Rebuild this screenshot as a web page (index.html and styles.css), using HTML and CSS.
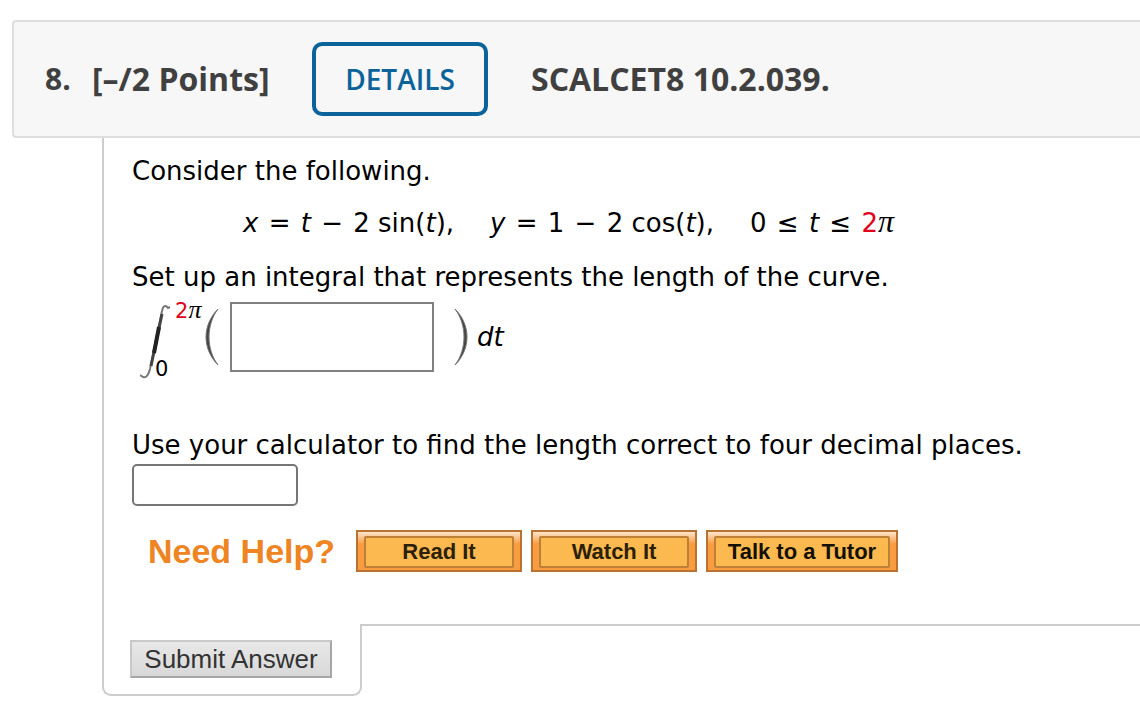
FILE: index.html
```html
<!DOCTYPE html>
<html lang="en">
<head>
<meta charset="utf-8">
<meta name="viewport" content="width=device-width, initial-scale=1">
<title>SCALCET8 10.2.039</title>
<link rel="stylesheet" href="styles.css">
</head>
<body>
<main class="question">
  <header class="question-header">
    <span class="number">8.</span>
    <span class="points">[–/2 Points]</span>
    <button type="button" class="details">DETAILS</button>
    <h1 class="source">SCALCET8 10.2.039.</h1>
  </header>
  <form class="question-body">
    <div class="content">
      <p class="line">Consider the following.</p>
      <p class="line equation">
        <span><i>x</i> <span class="op">=</span> <i>t</i> <span class="op">−</span> 2 sin(<i>t</i>),</span>
        <span><i>y</i> <span class="op">=</span> 1 <span class="op">−</span> 2 cos(<i>t</i>),</span>
        <span>0 <span class="op">≤</span> <i>t</i> <span class="op">≤</span> <span class="value">2</span><i class="pi">π</i></span>
      </p>
      <p class="line">Set up an integral that represents the length of the curve.</p>
      <div class="integral">
        <svg class="sign" width="32" height="78" viewBox="0 0 32 78" aria-hidden="true">
          <path d="M30 5L28 6C26 3 23 3 22 9L10 67C8 75 5 76 3 75L0 73" fill="none" stroke="#777" stroke-width="2"/>
          <path d="M22 12L11 64" fill="none" stroke="#444" stroke-width="3"/>
          <path d="M19 25L14 51" fill="none" stroke="#222" stroke-width="4"/>
        </svg>
        <div class="limits">
          <span class="upper"><span class="value">2</span><i class="pi">π</i></span>
          <span class="lower">0</span>
        </div>
        <svg width="14" height="58" viewBox="0 0 14 58" aria-hidden="true">
          <path d="M13 1C-3 17-3 41 13 57C1 41 1 17 13 1Z" fill="#444" stroke="#777" stroke-width="1"/>
        </svg>
        <input class="integrand" type="text" aria-label="Integrand">
        <svg width="14" height="58" viewBox="0 0 14 58" aria-hidden="true">
          <path d="M1 1C17 17 17 41 1 57C13 41 13 17 1 1Z" fill="#444" stroke="#777" stroke-width="1"/>
        </svg>
        <i class="differential">dt</i>
      </div>
      <label class="line" for="length">Use your calculator to find the length correct to four decimal places.</label>
      <input class="answer" id="length" type="text">
      <div class="help">
        <strong class="help-title">Need Help?</strong>
        <button type="button" class="help-button"><span>Read It</span></button>
        <button type="button" class="help-button"><span>Watch It</span></button>
        <button type="button" class="help-button wide"><span>Talk to a Tutor</span></button>
      </div>
    </div>
    <div class="footer">
      <div class="submit-tab"><button type="submit" class="submit">Submit Answer</button></div>
      <div class="footer-rule"></div>
    </div>
  </form>
</main>
</body>
</html>
```
FILE: styles.css
```css
* { box-sizing: border-box; }

body {
  margin: 0;
  background: #fff;
  color: #000;
  font: 26px/32px Verdana, "DejaVu Sans", sans-serif;
}

p, h1 { margin: 0; }

button, input { margin: 0; }

.question { padding: 20px 0 16px 12px; }

.question-header {
  display: flex;
  align-items: center;
  padding: 20px 0 20px 31px;
  border: 2px solid #dedede;
  border-right: 0;
  border-radius: 4px 0 0 4px;
  background: #f7f7f7;
  color: #404040;
  font: bold 32px/44px "Open Sans", sans-serif;
}

.number { width: 47px; font-size: 30px; }

.points { width: 220px; }

.details {
  width: 176px;
  height: 74px;
  margin-right: 43px;
  padding: 0;
  border: 4px solid #0b6399;
  border-radius: 10px;
  background: #f7f7f7;
  color: #0b6399;
  font: 600 28px/44px "Open Sans", sans-serif;
}

.source { font: inherit; }

.question-body { margin-left: 90px; }

.content {
  display: flex;
  flex-direction: column;
  align-items: flex-start;
  padding: 17px 0 52px 28px;
  border-left: 2px solid #ccc;
}

.equation {
  display: flex;
  gap: 36px;
  margin: 20px 0 22px 111px;
}

.op { margin: 0 2px; }

.value { color: #e2001a; }

.pi {
  font-family: "Liberation Serif", serif;
  font-size: 32px;
  line-height: 0;
}

.integral {
  display: flex;
  align-items: center;
  height: 78px;
  margin: 9px 0 49px 8px;
  padding-bottom: 8px;
}

.sign { align-self: flex-start; flex: none; }

.limits {
  display: flex;
  flex-direction: column;
  justify-content: space-between;
  align-self: flex-start;
  width: 48px;
  height: 76px;
  margin: 0 2px 0 -17px;
  font-size: 21px;
  line-height: 18px;
}

.limits .pi { font-size: 26px; }

.upper { padding-left: 20px; }

.integrand {
  width: 204px;
  height: 70px;
  margin: 0 20px 0 11px;
  padding: 4px 8px;
  border: 2px solid #808080;
  background: #fff;
  font: inherit;
}

.differential { margin-left: 9px; }

.answer {
  width: 166px;
  height: 42px;
  margin-top: 3px;
  padding: 2px 6px;
  border: 2px solid #767676;
  border-radius: 5px;
  background: #fff;
  font: inherit;
}

.help {
  display: flex;
  align-items: center;
  gap: 9px;
  margin: 24px 0 0 16px;
  font-family: Arial, "Liberation Sans", sans-serif;
}

.help-title { width: 199px; color: #ee8422; font-size: 34px; }

.help-button {
  width: 166px;
  height: 42px;
  padding: 4px 6px;
  border: 2px solid #b87333;
  background: linear-gradient(#fee5cc, #fcc793 5px, #f99c40 12px, #f99c40);
  color: #2c2108;
  font: bold 22px/28px Arial, "Liberation Sans", sans-serif;
}

.help-button span {
  display: block;
  border: 2px solid #bd8038;
  border-radius: 2px;
  background: #fbb950;
}

.wide { width: 192px; color: #141003; }

.footer { display: flex; }

.submit-tab {
  padding: 16px 28px 16px 26px;
  border: solid #ccc;
  border-width: 0 2px 2px;
  border-radius: 0 0 9px 9px;
}

.submit {
  display: block;
  width: 202px;
  height: 38px;
  padding: 0;
  border: 2px solid;
  border-color: #c8c8c8 #a6a6a6 #a6a6a6 #c8c8c8;
  background: linear-gradient(#e8e8e8, #d8d8d8);
  color: #333;
  font: 26px/32px Arial, "Liberation Sans", sans-serif;
}

.footer-rule { flex: 1; border-top: 2px solid #ccc; }
```
